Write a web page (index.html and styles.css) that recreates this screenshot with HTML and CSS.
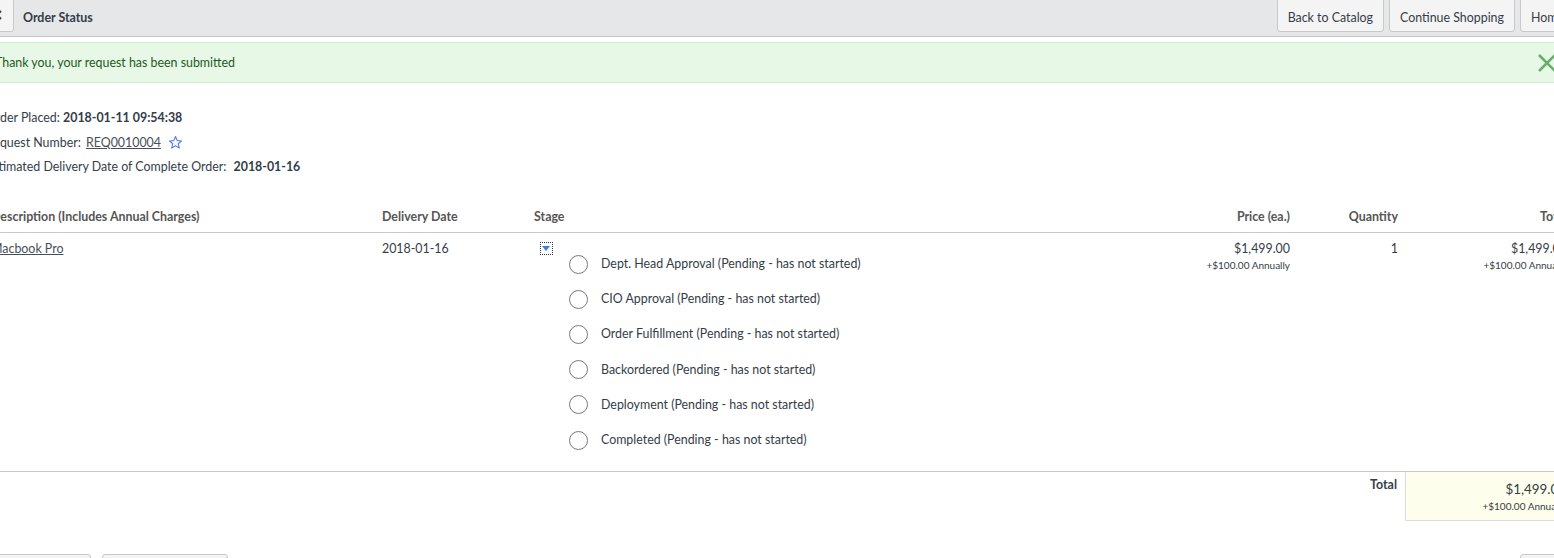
FILE: index.html
```html
<!DOCTYPE html>
<html lang="en">
<head>
    <meta charset="UTF-8">
    <title>Order Status</title>
    <link rel="stylesheet" href="styles.css">
</head>
<body>
<div class="page">

    <!-- barre du haut -->
    <div class="header">
        <button class="nav-back" aria-label="Back">
            <svg width="10" height="10" viewBox="0 0 10 10"><path d="M7 1 L3 5 L7 9" fill="none" stroke="#343d47" stroke-width="2"/></svg>
        </button>
        <div class="header-title">Order Status</div>
        <div class="header-buttons">
            <button class="btn">Back to Catalog</button>
            <button class="btn">Continue Shopping</button>
            <button class="btn">Home</button>
        </div>
    </div>

    <div class="alert">
        <span>Thank you, your request has been submitted</span>
        <svg class="alert-close" width="20" height="20" viewBox="0 0 20 20"><path d="M2 2 L18 18 M18 2 L2 18" stroke="#6aae6a" stroke-width="2.6"/></svg>
    </div>

    <div class="info">
        <div>Order Placed: <b>2018-01-11 09:54:38</b></div>
        <div>Request Number: <a href="#" class="req">REQ0010004</a>
            <svg class="star" width="15" height="15" viewBox="0 0 24 24"><path d="M12 2.5 L14.8 9 L21.8 9.5 L16.4 14 L18.1 21 L12 17.2 L5.9 21 L7.6 14 L2.2 9.5 L9.2 9 Z" fill="none" stroke="#4f7fe8" stroke-width="1.8" stroke-linejoin="round"/></svg>
        </div>
        <div>Estimated Delivery Date of Complete Order: <b class="eta">2018-01-16</b></div>
    </div>

    <table class="items">
        <colgroup>
            <col style="width: 391px">
            <col style="width: 152px">
            <col style="width: 622px">
            <col style="width: 150px">
            <col style="width: 108px">
            <col style="width: 169px">
        </colgroup>
        <tr>
            <th>Description (Includes Annual Charges)</th>
            <th>Delivery Date</th>
            <th>Stage</th>
            <th class="right">Price (ea.)</th>
            <th class="right">Quantity</th>
            <th class="right">Total</th>
        </tr>
        <tr>
            <td><a href="#">Macbook Pro</a></td>
            <td>2018-01-16</td>
            <td>
                <div class="stage">
                    <span class="stage-toggle"></span>
                    <ul class="stage-list">
                        <li><span class="circle"></span>Dept. Head Approval (Pending - has not started)</li>
                        <li><span class="circle"></span>CIO Approval (Pending - has not started)</li>
                        <li><span class="circle"></span>Order Fulfillment (Pending - has not started)</li>
                        <li><span class="circle"></span>Backordered (Pending - has not started)</li>
                        <li><span class="circle"></span>Deployment (Pending - has not started)</li>
                        <li><span class="circle"></span>Completed (Pending - has not started)</li>
                    </ul>
                </div>
            </td>
            <td class="right">$1,499.00<div class="annual">+$100.00 Annually</div></td>
            <td class="right">1</td>
            <td class="right">$1,499.00<div class="annual">+$100.00 Annually</div></td>
        </tr>
    </table>

    <div class="total-row">
        <div class="total-label">Total</div>
        <div class="total-box">
            <div class="total-value">$1,499.00</div>
            <div class="annual">+$100.00 Annually</div>
        </div>
    </div>

    <div class="footer">
        <div class="footer-left">
            <button class="btn">Back to Catalog</button>
            <button class="btn">Continue Shopping</button>
        </div>
        <button class="btn">Home</button>
    </div>

</div>
</body>
</html>
```

FILE: styles.css
```css
html, body {
    margin: 0;
    padding: 0;
    overflow: hidden;
    height: 558px;
}

body {
    font-family: Lato, "Open Sans", sans-serif;
    font-size: 12.4px;
    color: #343d47;
    background: white;
}

.page {
    margin-left: -17px;
    width: 1592px;
}

.header {
    display: flex;
    align-items: flex-start;
    height: 36px;
    background: #e6e7e8;
    border-bottom: 1px solid #c4c4c4;
}

.nav-back {
    width: 31px;
    height: 34px;
    margin-top: -2px;
    background: #f4f4f5;
    border: 1px solid #c8c8c8;
    border-radius: 3px;
    display: flex;
    align-items: center;
    justify-content: center;
    padding: 0;
}

.header-title {
    margin-left: 9px;
    padding-top: 1px;
    line-height: 34px;
    font-weight: bold;
}

.header-buttons {
    margin-left: auto;
    display: flex;
    gap: 5px;
}

.btn {
    font-family: inherit;
    font-size: 12.4px;
    color: #343d47;
    height: 34px;
    padding: 0 10px;
    background: #f4f4f5;
    border: 1px solid #c8c8c8;
    border-radius: 3px;
}

.header .btn {
    margin-top: -2px;
    padding-top: 4px;
}

.alert {
    display: flex;
    align-items: center;
    justify-content: space-between;
    margin-top: 5px;
    height: 39px;
    padding: 0 18px 0 12px;
    background: #e7f8e7;
    border-top: 1px solid #c9efc9;
    border-bottom: 1px solid #c9efc9;
    color: #1d5a1d;
}

.info {
    margin-top: 23px;
    padding-left: 3px;
    line-height: 24.5px;
}

.info a, .items a {
    color: #474f58;
}

.req {
    margin-left: 2px;
}

.eta {
    margin-left: 4px;
}

.star {
    vertical-align: -3px;
    margin-left: 4px;
}

.items {
    margin-top: 21px;
    width: 1592px;
    table-layout: fixed;
    border-collapse: collapse;
}

.items th {
    text-align: left;
    color: #555;
    padding: 8px 8px 7px;
    line-height: 16px;
    border-bottom: 1px solid #c8c8c8;
}

.items td {
    vertical-align: top;
    padding: 8px 8px 13px;
    line-height: 16px;
    border-bottom: 1px solid #c8c8c8;
}

.items .right {
    text-align: right;
}

.annual {
    font-size: 10px;
    line-height: 16px;
}

.stage {
    display: flex;
}

.stage-toggle {
    position: relative;
    width: 11px;
    height: 11px;
    margin: 1px 0 0 6px;
    border: 1px dotted #333;
}

.stage-toggle::after {
    content: "";
    position: absolute;
    left: 1px;
    top: 3px;
    border-left: 4.5px solid transparent;
    border-right: 4.5px solid transparent;
    border-top: 5px solid #3b7ee0;
}

.stage-list {
    list-style: none;
    margin: 6px 0 0 16px;
    padding: 0;
}

.stage-list li {
    display: flex;
    align-items: center;
    height: 35.2px;
}

.circle {
    width: 17px;
    height: 17px;
    border: 1.5px solid #7a7a7a;
    border-radius: 50%;
    margin-right: 13px;
}

.total-row {
    display: flex;
    justify-content: flex-end;
}

.total-label {
    font-weight: bold;
    padding: 5px 8px 0 0;
    line-height: 16px;
}

.total-box {
    width: 152px;
    padding: 8px 8px 6px;
    text-align: right;
    background: #fefeec;
    border: 1px solid #dcdcdc;
    border-top: none;
}

.total-value {
    font-size: 13.4px;
    line-height: 18px;
}

.footer {
    display: flex;
    justify-content: space-between;
    margin-top: 33px;
    padding-left: 1px;
}

.footer-left {
    display: flex;
    gap: 11px;
}
```
